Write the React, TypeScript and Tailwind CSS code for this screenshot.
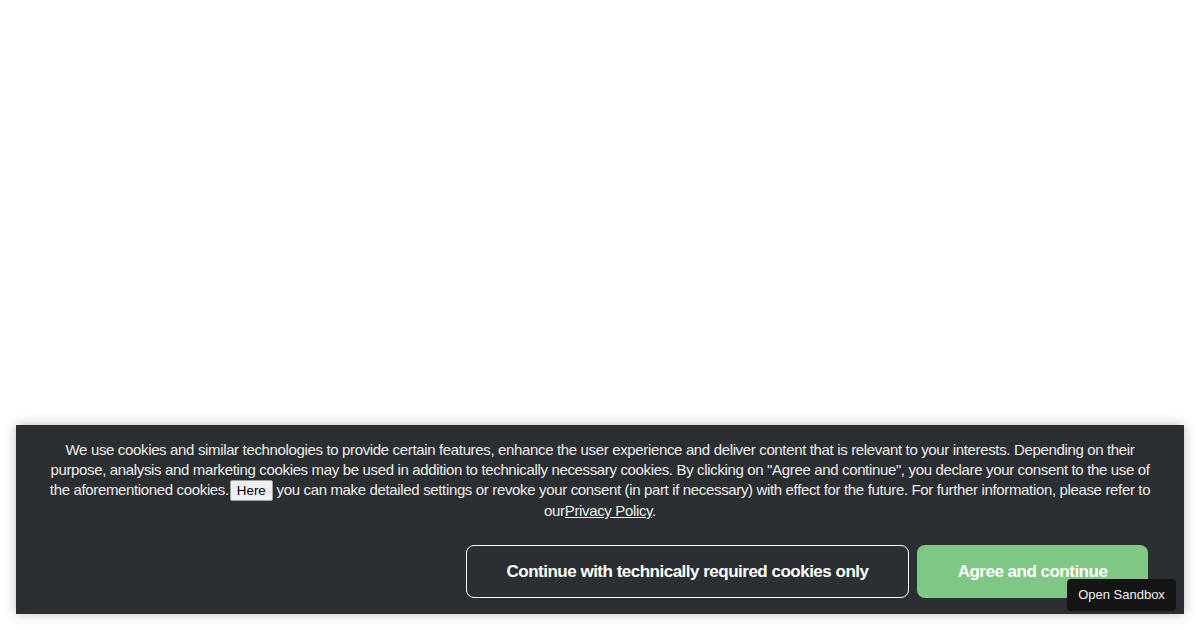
export default function App() {
  return (
    <div className="w-[1200px] h-[630px] bg-white relative overflow-hidden" style={{ fontFamily: '"Liberation Sans", Arial, sans-serif' }}>
      <div className="absolute left-4 right-4 bottom-4 bg-[#2b2f32] shadow-[0_0_12px_rgba(0,0,0,0.25)] pt-[15px] pb-4 pl-8 pr-8">
        <p className="text-[15px] tracking-[-0.35px] leading-[20px] text-[#ececec] text-center">
          We use cookies and similar technologies to provide certain features, enhance the user experience and deliver content that is relevant to your interests. Depending on their purpose, analysis and marketing cookies may be used in addition to technically necessary cookies. By clicking on "Agree and continue", you declare your consent to the use of the aforementioned cookies.<button className="ml-[1px] inline-block bg-[#efefef] text-black border border-[#a0a0a0] rounded-[2px] px-[6px] h-[21px] text-[13.33px] tracking-normal leading-[19px] align-baseline">Here</button>
          {' '}you can make detailed settings or revoke your consent (in part if necessary) with effect for the future. For further information, please refer to our<a className="underline text-[#ececec]" href="#">Privacy Policy</a>.
        </p>
        <div className="flex justify-end gap-2 mt-[24px] pr-1">
          <button className="w-[443px] h-[53px] border border-white rounded-[8px] text-white font-bold text-[17px] tracking-[-0.5px]">Continue with technically required cookies only</button>
          <button className="w-[231px] h-[53px] bg-[#7fc784] rounded-[8px] text-white font-bold text-[17px] tracking-[-0.5px]">Agree and continue</button>
        </div>
      </div>
      <div className="absolute right-6 bottom-[19px] w-[109px] h-[32px] bg-[#151515] rounded-[4px] text-[13px] text-[#f0f0f0] flex items-center justify-center">
        Open Sandbox
      </div>
    </div>
  );
}
